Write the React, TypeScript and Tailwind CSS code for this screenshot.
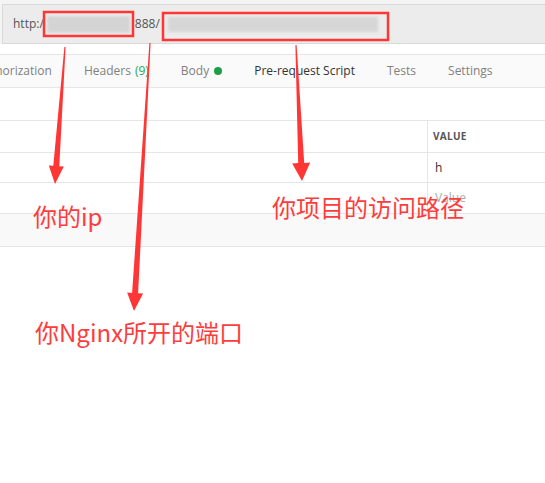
import React from 'react';

type Pt = [number, number];

// tapered arrow like a screenshot-tool annotation
const arrowPoints = (from: Pt, tip: Pt, shaftW: number, headW: number, headL: number) => {
  const dx = tip[0] - from[0];
  const dy = tip[1] - from[1];
  const len = Math.hypot(dx, dy);
  const ux = dx / len;
  const uy = dy / len;
  const nx = -uy;
  const ny = ux;
  const bx = tip[0] - ux * headL;
  const by = tip[1] - uy * headL;
  const p = (x: number, y: number) => `${x.toFixed(1)},${y.toFixed(1)}`;
  return [
    p(from[0] + nx * 0.6, from[1] + ny * 0.6),
    p(bx + (nx * shaftW) / 2, by + (ny * shaftW) / 2),
    p(bx + (nx * headW) / 2, by + (ny * headW) / 2),
    p(tip[0], tip[1]),
    p(bx - (nx * headW) / 2, by - (ny * headW) / 2),
    p(bx - (nx * shaftW) / 2, by - (ny * shaftW) / 2),
    p(from[0] - nx * 0.6, from[1] - ny * 0.6),
  ].join(' ');
};

const arrows: { from: Pt; tip: Pt; headW: number }[] = [
  { from: [65, 47], tip: [55, 184], headW: 15 },
  { from: [150, 43], tip: [134, 311], headW: 16 },
  { from: [296, 45], tip: [302, 181], headW: 18 },
];

const notes = [
  { text: '你的ip', className: 'left-[33px] top-[204px]' },
  { text: '你项目的访问路径', className: 'left-[272px] top-[195px]' },
  { text: '你Nginx所开的端口', className: 'left-[35px] top-[320px]' },
];

const tabs = [
  { label: 'Authorization', className: 'ml-[-24px]' },
  { label: 'Headers', count: '(9)' },
  { label: 'Body', dot: true },
  { label: 'Pre-request Script', active: true },
  { label: 'Tests' },
  { label: 'Settings' },
];

export default function App() {
  return (
    <div
      className="relative w-[545px] h-[483px] overflow-hidden bg-white"
      style={{ fontFamily: '"Open Sans", "Noto Sans", sans-serif' }}
    >
      {/* url bar */}
      <div className="bg-[#f4f4f4] pt-[4px] pl-[2px]">
        <div className="h-[40px] border border-r-0 border-[#d9d9d9] bg-[#ececec] flex items-center pl-[10px] text-[12px] text-[#555]">
          <span>http:/</span>
          <div className="ml-[3px] w-[83px] h-[17px] bg-[#d4d4d4] blur-[1.5px]" />
          <span className="ml-[5px]">888/</span>
          <div className="ml-[8px] w-[210px] h-[15px] bg-[#d6d6d6] blur-[1.5px]" />
        </div>
      </div>

      {/* request tabs */}
      <div className="mt-[10px] h-[34px] border-y border-[#e6e6e6] bg-[#fafafa] flex items-center gap-[32px] text-[12px] whitespace-nowrap">
        {tabs.map((t) => (
          <div
            key={t.label}
            className={`flex items-center gap-[5px] ${t.active ? 'text-[#333]' : 'text-[#808080]'} ${t.className ?? ''}`}
          >
            <span>
              {t.label}
              {t.count && <span className="ml-[4px] text-[#26a65b]">{t.count}</span>}
            </span>
            {t.dot && <span className="w-[8px] h-[8px] rounded-full bg-[#1e9e48]" />}
          </div>
        ))}
      </div>

      {/* params table */}
      <div className="mt-[32px] border-t border-[#e6e6e6] text-[12px]">
        <div className="grid grid-cols-[428px_1fr] h-[32px] border-b border-[#e6e6e6]">
          <div className="border-r border-[#e6e6e6]" />
          <div className="flex items-center pl-[5px] text-[10px] font-bold tracking-[0.3px] text-[#555]">VALUE</div>
        </div>
        <div className="grid grid-cols-[428px_1fr] h-[30px] border-b border-[#e6e6e6]">
          <div className="border-r border-[#e6e6e6]" />
          <div className="flex items-center pl-[7px] text-[#333]">h</div>
        </div>
        <div className="grid grid-cols-[428px_1fr] h-[31px] border-b border-[#e6e6e6]">
          <div className="border-r border-[#e6e6e6]" />
          <div className="flex items-center pl-[7px] text-[#aaa]">Value</div>
        </div>
        <div className="h-[33px] bg-[#f9f9f9] border-b border-[#e6e6e6]" />
      </div>

      {/* annotations */}
      <svg className="absolute inset-0 pointer-events-none" width="545" height="483" viewBox="0 0 545 483">
        <rect x="44" y="12" width="89" height="24" fill="none" stroke="#ff3636" strokeWidth="2.5" />
        <rect x="163" y="13" width="225" height="27" fill="none" stroke="#ff3636" strokeWidth="2.5" />
        {arrows.map((a, i) => (
          <polygon key={i} points={arrowPoints(a.from, a.tip, 6, a.headW, 18)} fill="#ff3636" />
        ))}
      </svg>
      {notes.map((n) => (
        <div
          key={n.text}
          className={`absolute whitespace-nowrap text-[24px] leading-none text-[#ff3c3c] ${n.className}`}
          style={{ fontFamily: '"Noto Sans CJK SC", sans-serif' }}
        >
          {n.text}
        </div>
      ))}
    </div>
  );
}
